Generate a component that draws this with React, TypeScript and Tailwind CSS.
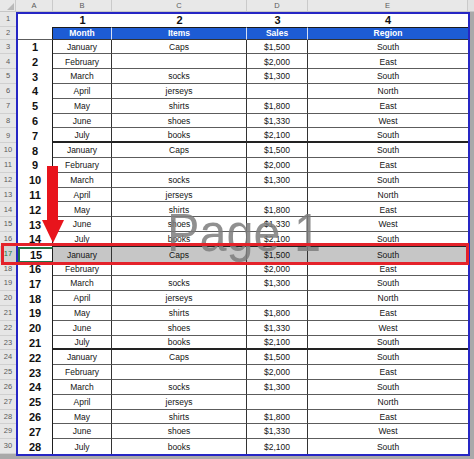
import React from "react";

const months = ["January", "February", "March", "April", "May", "June", "July"];
const items = ["Caps", "", "socks", "jerseys", "shirts", "shoes", "books"];
const sales = ["$1,500", "$2,000", "$1,300", "", "$1,800", "$1,330", "$2,100"];
const regions = ["South", "East", "South", "North", "East", "West", "South"];

const colLetters = [
  { label: "", w: "w-[16px]" },
  { label: "A", w: "w-[37px]" },
  { label: "B", w: "w-[59px]" },
  { label: "C", w: "w-[135px]" },
  { label: "D", w: "w-[61px]" },
  { label: "E", w: "w-[160px]" },
];

const GRID = "grid grid-cols-[35px_59px_135px_61px_160px]";

function RowHead({ n, h, sel }: { n: number; h: string; sel?: boolean }) {
  return (
    <div
      className={`${h} flex items-center justify-center border-b border-[#d0d0d0] text-[7.5px] leading-none ${
        sel ? "bg-[#d2d2d2] text-[#217346]" : "bg-[#e6e6e6] text-[#5a5a5a]"
      }`}
    >
      {n}
    </div>
  );
}

function DataRow({ i }: { i: number }) {
  const k = i % 7;
  const sel = i === 14;
  const last = i === 27;
  const groupEnd = k === 6 && !last;
  const line = last ? "" : groupEnd ? "border-b-2 border-b-[#222]" : "border-b border-b-[#5c5c5c]";
  const cell = `flex items-center justify-center pt-px text-[8.5px] leading-none text-[#141414] ${line} ${
    sel ? "bg-[#c6c6c6] border-b-[#3f9d62]" : ""
  }`;

  return (
    <div className={`${GRID} h-[14.8px]`}>
      <div
        className={`flex items-center justify-center pt-px text-[11px] font-bold leading-none text-[#111] border-r border-r-[#1e1e1e] ${
          sel ? "border-2 border-[#217346]" : ""
        }`}
      >
        {i + 1}
      </div>
      <div className={`${cell} border-r border-r-[#333]`}>{months[k]}</div>
      <div className={`${cell} border-r border-r-[#333]`}>{items[k]}</div>
      <div className={`${cell} border-r border-r-[#333]`}>{sales[k]}</div>
      <div className={cell}>{regions[k]}</div>
    </div>
  );
}

export default function App() {
  const dataRows = Array.from({ length: 28 }, (_, i) => i);

  return (
    <div className="relative w-[474px] h-[459px] overflow-hidden bg-[#a9a9a9] font-['Liberation_Sans',Arial,sans-serif]">
      {/* Column headers */}
      <div className="flex h-[12px] bg-[#e8e8e8] border-b border-[#c6c6c6]">
        {colLetters.map((c, idx) => (
          <div
            key={idx}
            className={`${c.w} relative flex items-center justify-center border-r border-[#cacaca] text-[7.5px] leading-none text-[#5a5a5a]`}
          >
            {idx === 0 ? (
              <svg width="16" height="12" viewBox="0 0 16 12" className="absolute inset-0">
                <polygon points="14,3 14,10 7,10" fill="#b9b9b9" />
              </svg>
            ) : (
              c.label
            )}
          </div>
        ))}
        <div className="flex-1 bg-[#e2e2e2]" />
      </div>

      <div className="flex">
        {/* Row headers */}
        <div className="w-[16px] flex flex-col">
          <RowHead n={1} h="h-[15px]" />
          <RowHead n={2} h="h-[12.6px]" />
          {dataRows.map((i) => (
            <RowHead key={i} n={i + 3} h="h-[14.8px]" sel={i === 14} />
          ))}
        </div>

        {/* Print area */}
        <div className="w-[454px] border-2 border-[#2626c4] bg-white">
          <div className={`${GRID} h-[13px]`}>
            <div />
            {["1", "2", "3", "4"].map((n) => (
              <div key={n} className="flex items-center justify-center text-[11px] font-bold leading-none text-[#111]">
                {n}
              </div>
            ))}
          </div>
          <div className={`${GRID} h-[12.6px]`}>
            <div className="border-r border-r-[#1e1e1e] border-b border-b-[#5c5c5c]" />
            {["Month", "Items", "Sales", "Region"].map((h, idx) => (
              <div
                key={h}
                className={`flex items-center justify-center bg-[#1d5cd4] border-t border-t-[#1a1a1a] border-b border-b-[#333] text-[8.5px] font-bold leading-none text-white ${
                  idx < 3 ? "border-r border-r-[#d6e0f5]" : ""
                }`}
              >
                {h}
              </div>
            ))}
          </div>
          {dataRows.map((i) => (
            <DataRow key={i} i={i} />
          ))}
        </div>
        <div className="flex-1" />
      </div>

      {/* Page watermark */}
      <div className="absolute left-[167px] top-[205px] origin-left scale-x-[0.9] text-[54px] leading-none text-[#7c7c7c]/85 whitespace-nowrap pointer-events-none">
        Page 1
      </div>

      {/* Red arrow */}
      <svg className="absolute left-[40px] top-[166px]" width="26" height="78" viewBox="0 0 26 78">
        <rect x="7" y="0" width="11" height="55" fill="#e8141c" />
        <polygon points="2,54 24,54 13,77" fill="#e8141c" />
      </svg>

      {/* Red highlight box */}
      <div className="absolute left-[1px] top-[243px] w-[468px] h-[22px] border-[3px] border-[#e4222a] pointer-events-none" />
    </div>
  );
}
